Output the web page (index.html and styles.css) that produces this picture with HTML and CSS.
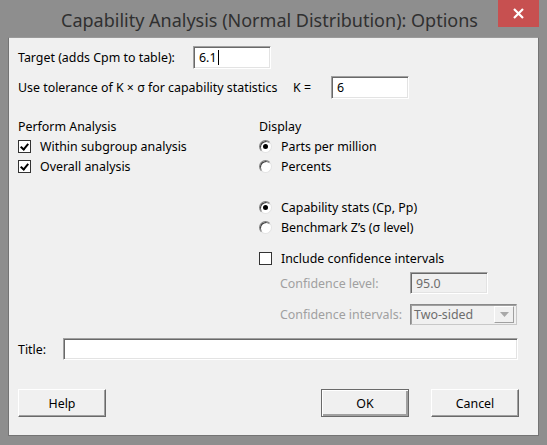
FILE: index.html
```html
<!doctype html>
<html lang="en">
  <head>
    <meta charset="UTF-8" />
    <title>Capability Analysis (Normal Distribution): Options</title>
    <link rel="stylesheet" href="styles.css">
  </head>
  <body>
    <div class="window">
      <div class="titlebar">
        <span></span>
        <h1 class="title">Capability Analysis (Normal Distribution): Options</h1>
        <div class="close">
          <svg width="11" height="11" viewBox="0 0 11 11">
            <path d="M1 1 L10 10 M10 1 L1 10" stroke="#fff" stroke-width="2.2" fill="none" />
          </svg>
        </div>
      </div>

      <div class="panel">
        <div class="row row-target">
          <span class="target-lbl">Target (adds Cpm to table):</span>
          <div class="field">6.1<span class="caret"></span></div>
        </div>

        <div class="row row-k">
          <span class="tol-lbl">Use tolerance of K × σ for capability statistics</span>
          <span class="k-lbl">K =</span>
          <div class="field">6</div>
        </div>

        <div class="groups">
          <div class="group">
            <div class="group-head">Perform Analysis</div>
            <div class="opt"><span class="check on"></span>Within subgroup analysis</div>
            <div class="opt"><span class="check on"></span>Overall analysis</div>
          </div>

          <div class="group">
            <div class="group-head">Display</div>
            <div class="opt"><span class="radio on"></span>Parts per million</div>
            <div class="opt"><span class="radio"></span>Percents</div>

            <div class="opt opt-gap"><span class="radio on"></span>Capability stats (Cp, Pp)</div>
            <div class="opt"><span class="radio"></span>Benchmark Z’s (σ level)</div>

            <div class="opt opt-ci"><span class="check"></span>Include confidence intervals</div>

            <div class="sub sub-level">
              <span class="sub-lbl">Confidence level:</span>
              <div class="field disabled">95.0</div>
            </div>
            <div class="sub sub-int">
              <span class="sub-lbl">Confidence intervals:</span>
              <div class="combo">
                <span class="combo-text">Two-sided</span>
                <span class="combo-btn">
                  <svg width="9" height="5" viewBox="0 0 9 5"><path d="M0 0 H9 L4.5 5 Z" fill="#a8a8a8" /></svg>
                </span>
              </div>
            </div>
          </div>
        </div>

        <div class="row row-title">
          <span class="title-lbl">Title:</span>
          <div class="field wide"></div>
        </div>

        <div class="buttons">
          <button class="btn">Help</button>
          <span class="spacer"></span>
          <button class="btn default">OK</button>
          <button class="btn">Cancel</button>
        </div>
      </div>
    </div>
  </body>
</html>
```

FILE: styles.css
```css
body {
  margin: 0;
  padding: 0;
  font-family: 'Noto Sans', 'Open Sans', sans-serif;
  font-size: 12.4px;
  color: #000;
  background: #8e8e8e;
}

.window {
  width: 547px;
  height: 445px;
  box-sizing: border-box;
  background: #8e8e8e;
  padding: 0 8px 9px 8px;
  display: flex;
  flex-direction: column;
}

.titlebar {
  height: 37px;
  display: grid;
  grid-template-columns: 1fr auto 1fr;
  margin: 0 -8px;
  padding-right: 8px;
}

.title {
  margin: 0;
  font-family: 'Noto Sans', 'Open Sans', sans-serif;
  font-weight: normal;
  font-size: 18px;
  line-height: 20px;
  padding-top: 10px;
  color: #303030;
  white-space: nowrap;
}

.close {
  justify-self: end;
  width: 41px;
  height: 27px;
  background: #c75050;
  display: flex;
  align-items: center;
  justify-content: center;
}

.panel {
  flex: 1;
  background: #f0f0f0;
  border: 1px solid #747474;
  border-top-color: #9a9a9a;
  padding: 8px 19px 0 9px;
}

.row {
  display: flex;
  align-items: center;
  height: 23px;
}

.row-k {
  margin-top: 7px;
}

.target-lbl {
  width: 175px;
}

.tol-lbl {
  width: 275px;
}

.k-lbl {
  width: 38px;
}

.field {
  box-sizing: border-box;
  width: 78px;
  height: 23px;
  background: #fff;
  border: 1px solid;
  border-color: #a0a0a0 #fff #fff #a0a0a0;
  box-shadow: inset 1px 1px 0 #696969, inset -1px -1px 0 #e3e3e3;
  padding: 0 5px;
  line-height: 21px;
  display: flex;
  align-items: center;
}

.caret {
  display: inline-block;
  width: 1px;
  height: 15px;
  background: #000;
  margin-left: 1px;
}

.groups {
  display: grid;
  grid-template-columns: 241px 1fr;
  margin-top: 20px;
}

.group-head {
  height: 16px;
  line-height: 16px;
  margin-bottom: 1px;
}

.opt {
  display: flex;
  align-items: center;
  height: 20px;
}

.opt-gap {
  margin-top: 21px;
}

.opt-ci {
  margin-top: 11px;
}

.check,
.radio {
  flex: none;
  box-sizing: border-box;
  width: 13px;
  height: 13px;
  margin-right: 9px;
  background: #fff;
}

.check {
  border: 1px solid #333;
  position: relative;
}

.check.on::after {
  content: '';
  position: absolute;
  left: 3px;
  top: 1px;
  width: 3px;
  height: 6px;
  border: solid #000;
  border-width: 0 2px 2px 0;
  transform: rotate(40deg);
}

.radio {
  border-radius: 50%;
  border: 1px solid;
  border-color: #808080 #e3e3e3 #e3e3e3 #808080;
  box-shadow: inset 1px 1px 0 #404040;
  display: flex;
  align-items: center;
  justify-content: center;
}

.radio.on::after {
  content: '';
  width: 5px;
  height: 5px;
  border-radius: 50%;
  background: #000;
}

.sub {
  display: flex;
  align-items: center;
  padding-left: 21px;
  color: #a0a0a0;
}

.sub-level {
  margin-top: 4px;
  height: 22px;
}

.sub-level .field {
  height: 22px;
}

.sub-int {
  margin-top: 10px;
  height: 21px;
}

.sub-lbl {
  width: 130px;
}

.field.disabled {
  background: #f0f0f0;
  color: #6d6d6d;
}

.combo {
  box-sizing: border-box;
  width: 107px;
  height: 21px;
  border: 1px solid #8a8a8a;
  border-right-color: #c8c8c8;
  border-bottom-color: #c8c8c8;
  box-shadow: inset 1px 1px 0 #a0a0a0;
  background: #f0f0f0;
  color: #6d6d6d;
  display: flex;
  align-items: center;
  padding: 0 2px 0 3px;
}

.combo-text {
  flex: 1;
}

.combo-btn {
  box-sizing: border-box;
  width: 20px;
  height: 17px;
  border: 1px solid;
  border-color: #fff #a0a0a0 #a0a0a0 #fff;
  display: flex;
  align-items: center;
  justify-content: center;
}

.row-title {
  margin-top: 13px;
  height: 22px;
}

.title-lbl {
  width: 45px;
}

.field.wide {
  flex: 1;
  width: auto;
  height: 22px;
  margin-right: 1px;
}

.buttons {
  display: flex;
  margin-top: 29px;
  gap: 22px;
}

.spacer {
  flex: 1;
}

.btn {
  box-sizing: border-box;
  width: 88px;
  height: 28px;
  font-family: 'Noto Sans', 'Open Sans', sans-serif;
  font-size: 12.4px;
  color: #000;
  background: #f0f0f0;
  border: 1px solid;
  border-color: #fff #696969 #696969 #fff;
  box-shadow: inset -1px -1px 0 #a0a0a0;
  padding: 0;
}

.btn.default {
  border-color: #6a6a6a;
  box-shadow: inset 1px 1px 0 #fff, inset -2px -2px 0 #a0a0a0;
}
```
